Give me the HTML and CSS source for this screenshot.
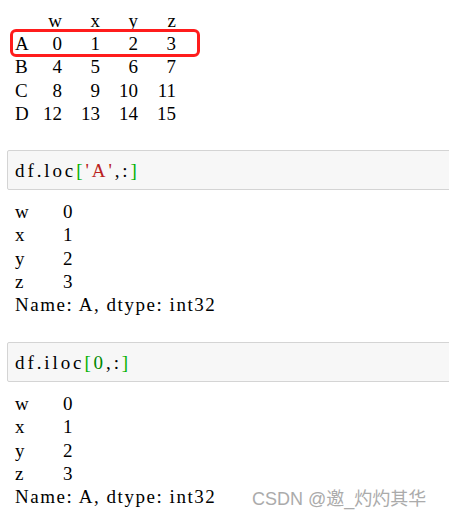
FILE: index.html
```html
<!DOCTYPE html>
<html>
<head>
<meta charset="utf-8">
<link rel="stylesheet" href="styles.css">
</head>
<body>
<div class="page">
  <div class="frame">
    <div class="table">
      <span></span><span class="num-col">w</span><span class="num-col">x</span><span class="num-col">y</span><span class="num-col">z</span>
      <span>A</span><span class="num-col">0</span><span class="num-col">1</span><span class="num-col">2</span><span class="num-col">3</span>
      <span>B</span><span class="num-col">4</span><span class="num-col">5</span><span class="num-col">6</span><span class="num-col">7</span>
      <span>C</span><span class="num-col">8</span><span class="num-col">9</span><span class="num-col">10</span><span class="num-col">11</span>
      <span>D</span><span class="num-col">12</span><span class="num-col">13</span><span class="num-col">14</span><span class="num-col">15</span>
    </div>
    <div class="highlight"></div>
  </div>

  <div class="cell">
    <div class="code">df.loc<span class="br">[</span><span class="str">'A'</span>,:<span class="br">]</span></div>
  </div>
  <div class="output">
    <div class="series">
      <span>w</span><span>0</span>
      <span>x</span><span>1</span>
      <span>y</span><span>2</span>
      <span>z</span><span>3</span>
    </div>
    <div class="meta">Name: A, dtype: int32</div>
  </div>

  <div class="cell">
    <div class="code">df.iloc<span class="br">[</span><span class="num">0</span>,:<span class="br">]</span></div>
  </div>
  <div class="output">
    <div class="series">
      <span>w</span><span>0</span>
      <span>x</span><span>1</span>
      <span>y</span><span>2</span>
      <span>z</span><span>3</span>
    </div>
    <div class="meta">Name: A, dtype: int32</div>
  </div>

  <div class="watermark">CSDN @邀_灼灼其华</div>
</div>
</body>
</html>
```

FILE: styles.css
```css
html, body {
  margin: 0;
  padding: 0;
  background: #ffffff;
  overflow: hidden;
}

.page {
  position: relative;
  width: 449px;
  height: 525px;
  overflow: hidden;
  font-family: "Liberation Serif", "Noto Sans CJK SC", serif;
  font-size: 19px;
  line-height: 23.3px;
  color: #000000;
}

.frame {
  position: relative;
  padding: 8.9px 0 0 15px;
}

.table {
  display: grid;
  grid-template-columns: 9px repeat(4, 38px);
  width: max-content;
}

.num-col {
  text-align: right;
}

.highlight {
  position: absolute;
  left: 9.5px;
  top: 29px;
  width: 190px;
  height: 28px;
  box-sizing: border-box;
  border: 3.5px solid #ff1c1c;
  border-radius: 6px;
}

.cell {
  margin: 24.6px -20px 0 7px;
  background: #f7f7f7;
  border: 1px solid #d4d4d4;
  border-radius: 2px;
  padding: 7.9px 0 6.8px 7px;
}

.output + .cell {
  margin-top: 25.5px;
}

.code {
  letter-spacing: 2.9px;
  white-space: pre;
}

.br { color: #00b000; }
.str { color: #ba2121; }
.num { color: #008800; }

.output {
  padding-left: 15px;
  margin-top: 10px;
}

.series {
  display: grid;
  grid-template-columns: 48px auto;
  width: max-content;
}

.meta {
  letter-spacing: 1.55px;
  white-space: pre;
}

.watermark {
  position: absolute;
  left: 252px;
  top: 487px;
  font-family: "Liberation Sans", "Noto Sans CJK SC", sans-serif;
  font-size: 18px;
  line-height: 24px;
  color: #ababab;
  white-space: nowrap;
}
```
